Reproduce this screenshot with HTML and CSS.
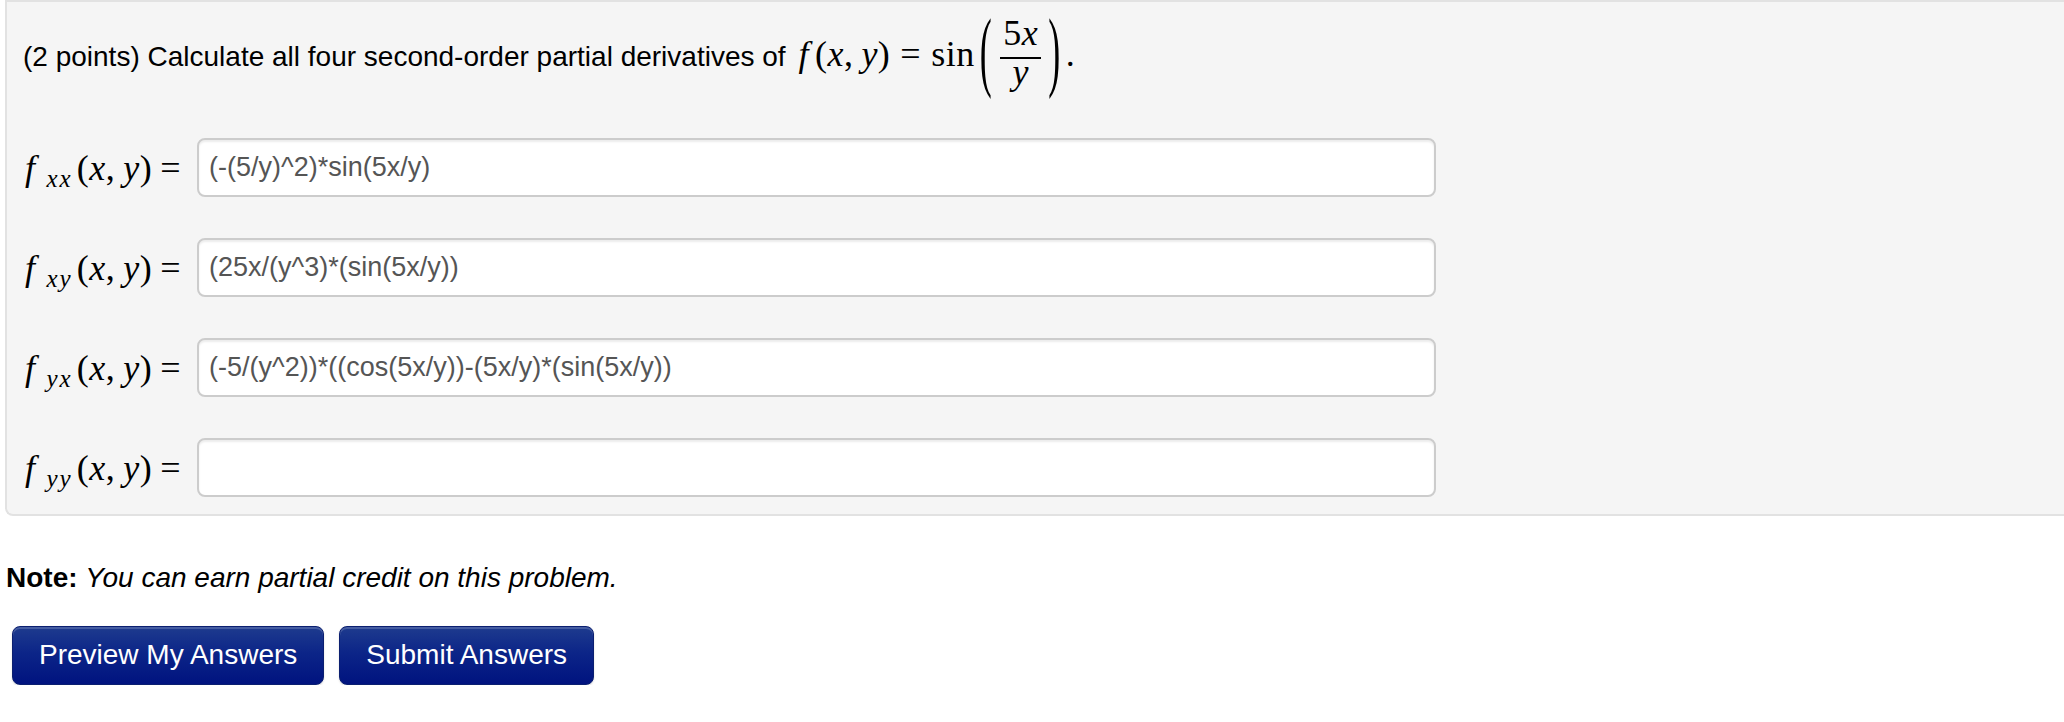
FILE: index.html
```html
<!DOCTYPE html>
<html lang="en">
<head>
  <meta charset="UTF-8">
  <meta name="viewport" content="width=device-width, initial-scale=1.0">
  <title>Problem</title>
  <link rel="stylesheet" href="styles.css">
</head>
<body>
  <div class="problem">
    <div class="title">(2 points) Calculate all four second-order partial derivatives of <span class="math"><i class="fn">f</i>(<i>x</i>,<span class="thin"></span><i>y</i>)<span class="eq">=</span>sin<span class="paren">(</span><span class="frac"><span class="num">5<i>x</i></span><span class="den"><i>y</i></span></span><span class="paren">)</span><span class="dot">.</span></span></div>

    <div class="row">
      <span class="label math"><i class="fn">f</i><span class="sub"><i>xx</i></span>(<i>x</i>,<span class="thin"></span><i>y</i>)<span class="eq">=</span></span>
      <input class="answer" type="text" value="(-(5/y)^2)*sin(5x/y)">
    </div>
    <div class="row">
      <span class="label math"><i class="fn">f</i><span class="sub"><i>xy</i></span>(<i>x</i>,<span class="thin"></span><i>y</i>)<span class="eq">=</span></span>
      <input class="answer" type="text" value="(25x/(y^3)*(sin(5x/y))">
    </div>
    <div class="row">
      <span class="label math"><i class="fn">f</i><span class="sub"><i>yx</i></span>(<i>x</i>,<span class="thin"></span><i>y</i>)<span class="eq">=</span></span>
      <input class="answer" type="text" value="(-5/(y^2))*((cos(5x/y))-(5x/y)*(sin(5x/y))">
    </div>
    <div class="row">
      <span class="label math"><i class="fn">f</i><span class="sub"><i>yy</i></span>(<i>x</i>,<span class="thin"></span><i>y</i>)<span class="eq">=</span></span>
      <input class="answer" type="text" value="">
    </div>
  </div>

  <p class="note"><b>Note:</b> <i>You can earn partial credit on this problem.</i></p>

  <div class="buttons">
    <button class="btn" type="button">Preview My Answers</button>
    <button class="btn" type="button">Submit Answers</button>
  </div>
</body>
</html>
```

FILE: styles.css
```css
body {
  margin: 0;
  background: #fff;
  color: #000;
  font-family: "Liberation Sans", Arial, sans-serif;
  font-size: 28px;
}

.problem {
  margin-left: 5px;
  padding: 15px 0 17px 16px;
  background: #f5f5f5;
  border: 2px solid #e2e2e2;
  border-right: none;
  border-radius: 0 0 0 8px;
}

.title {
  white-space: nowrap;
  margin-bottom: -2px;
}

.math {
  font-family: "Liberation Serif", "Times New Roman", serif;
  font-size: 36px;
  letter-spacing: 0.5px;
}
.math i {
  font-style: italic;
}
.fn {
  margin-left: 5px;
  margin-right: 6px;
}
.thin {
  display: inline-block;
  width: 8px;
}
.eq {
  display: inline-block;
  margin: 0 10px 0 10px;
}

.paren {
  display: inline-block;
  line-height: 1;
  vertical-align: middle;
  transform-origin: 50% 60%;
  transform: translateY(-2px) scaleY(2.45);
  margin: 0 0 0 5px;
}
.paren + .frac {
  margin-left: 8px;
}
.frac + .paren {
  margin: 0 0 0 7px;
}
.dot {
  margin-left: 5px;
}

.frac {
  display: inline-flex;
  flex-direction: column;
  align-items: center;
  vertical-align: middle;
}
.num {
  line-height: 30px;
  padding: 1px 3px 9px;
}
.den {
  align-self: stretch;
  text-align: center;
  border-top: 2px solid #000;
  line-height: 26px;
  padding-bottom: 14px;
}

.row {
  display: flex;
  align-items: center;
  margin-top: 41px;
}
.label {
  height: 36px;
  line-height: 36px;
  margin-right: 16px;
  white-space: nowrap;
}
.label .fn {
  margin-left: 2px;
  margin-right: 11px;
}
.label .eq {
  margin: 0 0 0 8px;
}
.sub {
  font-size: 25px;
  line-height: 1;
  vertical-align: -7px;
  letter-spacing: 2px;
  margin-right: 4px;
}

.answer {
  box-sizing: border-box;
  width: 1239px;
  height: 59px;
  padding: 0 10px;
  border: 2px solid #cccccc;
  border-radius: 8px;
  background: #fff;
  box-shadow: inset 0 2px 2px rgba(0, 0, 0, 0.075);
  font-family: "Liberation Sans", Arial, sans-serif;
  font-size: 27px;
  color: #555;
}

.note {
  margin: 45px 0 0 6px;
  line-height: 1.2;
}

.buttons {
  display: flex;
  gap: 15px;
  margin-top: 31px;
  padding-left: 12px;
}
.btn {
  height: 59px;
  padding: 0 26px;
  border: 1px solid #0b1f70;
  border-radius: 8px;
  background: linear-gradient(to bottom, #1e3b8e 0%, #0c2588 45%, #00137f 100%);
  box-shadow: inset 0 2px 0 rgba(255, 255, 255, 0.18), 0 1px 2px rgba(0, 0, 0, 0.15);
  color: #fff;
  font-family: "Liberation Sans", Arial, sans-serif;
  font-size: 28px;
}
```
